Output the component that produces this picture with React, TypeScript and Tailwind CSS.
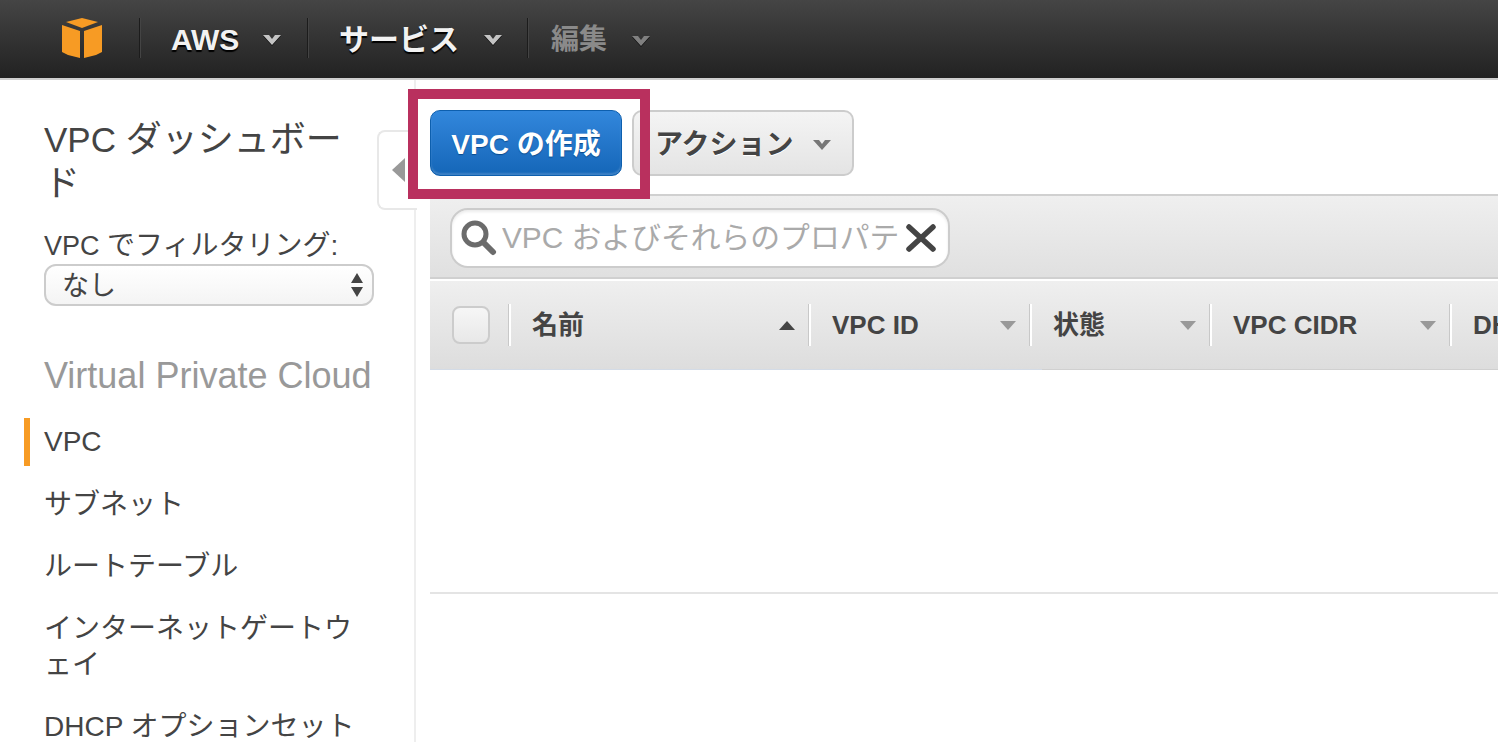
import { Fragment } from "react";

const FONT = "[font-family:'Liberation_Sans','Noto_Sans_CJK_JP',sans-serif]";

const navItems = [
  "サブネット",
  "ルートテーブル",
  "インターネットゲートウェイ",
  "DHCP オプションセット",
];

function Chevron({ color }: { color: string }) {
  return (
    <svg width="18" height="10" viewBox="0 0 18 10" className="drop-shadow-[0_1px_0_rgba(0,0,0,0.7)]">
      <path d="M0 0h6l3 4 3-4h6l-9 10z" fill={color} />
    </svg>
  );
}

function CubeLogo() {
  return (
    <svg width="40" height="40" viewBox="0 0 40 40">
      <path d="M4 4 20 0 36 4 20 10z" fill="#f79b24" />
      <path d="M0 7 18 13V40L6 37 0 34z" fill="#f79b24" />
      <path d="M40 7 22 13V40L34 37 40 34z" fill="#f79b24" />
    </svg>
  );
}

function TopBar() {
  return (
    <div className="flex h-[80px] shrink-0 items-center border-b-2 border-[#cfcfcf] bg-gradient-to-b from-[#454545] to-[#222222] pb-[2px]">
      <div className="ml-[62px] flex w-[77px] justify-start">
        <CubeLogo />
      </div>
      <div className="h-[40px] w-[2px] border-r border-[#444] bg-[#1c1c1c]" />
      <div className="flex w-[166px] items-center pl-[30px] pt-[2px] text-[30px] font-bold text-[#f2f2f2] [text-shadow:0_2px_1px_#000]">
        AWS
        <span className="ml-[24px] mt-[2px]"><Chevron color="#c4c4c4" /></span>
      </div>
      <div className="h-[40px] w-[2px] border-r border-[#444] bg-[#1c1c1c]" />
      <div className="flex w-[218px] items-center pl-[30px] pt-[2px] text-[30px] font-bold text-[#f2f2f2] [text-shadow:0_2px_1px_#000]">
        サービス
        <span className="ml-[25px] mt-[2px]"><Chevron color="#c4c4c4" /></span>
      </div>
      <div className="h-[40px] w-[2px] border-r border-[#444] bg-[#1c1c1c]" />
      <div className="flex items-center pl-[22px] pt-[3px] text-[28px] font-bold text-[#8a8a8a]">
        編集
        <span className="ml-[25px] mt-[2px]"><Chevron color="#808080" /></span>
      </div>
    </div>
  );
}

function Sidebar() {
  return (
    <div className="relative w-[416px] shrink-0 border-r-2 border-[#eeeeee] pl-[44px] pt-[38px] text-[#444444]">
      <h1 className="w-[310px] text-[35px] leading-[44px] font-normal">
        VPC <span className="text-[36px]">ダッシュボード</span>
      </h1>
      <div className="mt-[23px] text-[27px] leading-[34px]">
        VPC <span className="text-[28px]">でフィルタリング:</span>
      </div>
      <div className="mt-[1px] flex h-[42px] w-[330px] items-center justify-between rounded-[12px] border-2 border-[#cccccc] bg-gradient-to-b from-white to-[#f4f4f4] pl-[16px] pr-[8px] text-[27px]">
        <span className="pt-[3px]">なし</span>
        <svg width="14" height="26" viewBox="0 0 14 26">
          <path d="M7 1 13 11H1z M1 15H13L7 25z" fill="#444" />
        </svg>
      </div>
      <div className="mt-[48px] text-[36px] leading-[44px] text-[#999999]">Virtual Private Cloud</div>
      <div className="relative mt-[20px] flex h-[48px] items-center text-[28px]">
        <span className="absolute left-[-20px] top-0 h-full w-[6px] bg-[#f79b24]" />
        VPC
      </div>
      <div className="mt-[21px] flex w-[320px] flex-col gap-[26px] text-[28px] leading-[36px]">
        {navItems.map((item) => (
          <div key={item}>{item}</div>
        ))}
      </div>
      <div className="absolute left-[377px] top-[50px] flex h-[80px] w-[40px] items-center rounded-l-[8px] border-2 border-r-0 border-[#e8e8e8] bg-white pl-[13px]">
        <svg width="14" height="24" viewBox="0 0 14 24">
          <path d="M13 0V24L0 12z" fill="#999" />
        </svg>
      </div>
    </div>
  );
}

function SearchBox() {
  return (
    <div className="mt-[2px] flex h-[60px] w-[500px] shrink-0 items-center rounded-[18px] border-2 border-[#cccccc] bg-white pl-[9px] pr-[12px] shadow-[inset_0_2px_3px_rgba(0,0,0,0.08)]">
      <svg width="36" height="36" viewBox="0 0 36 36" className="shrink-0">
        <circle cx="14" cy="14" r="11" fill="none" stroke="#6b6b6b" strokeWidth="5" />
        <path d="M23 23 32 32" stroke="#6b6b6b" strokeWidth="6" strokeLinecap="round" />
      </svg>
      <span className="ml-[5px] flex-1 overflow-hidden whitespace-nowrap pt-[2px] text-[29.8px] text-[#aaaaaa]">VPC およびそれらのプロパテ</span>
      <svg width="30" height="28" viewBox="0 0 30 28" className="shrink-0">
        <path d="M3 3 27 25M27 3 3 25" stroke="#444" strokeWidth="5.5" strokeLinecap="round" />
      </svg>
    </div>
  );
}

const columns = [
  { label: "名前", width: "w-[297px]", up: true },
  { label: "VPC ID", width: "w-[218px]", up: false },
  { label: "状態", width: "w-[177px]", up: false },
  { label: "VPC CIDR", width: "w-[237px]", up: false },
];

function TableHeader() {
  return (
    <div className="relative mt-[2px] flex h-[89px] items-center border-b border-[#d0d0d0] bg-gradient-to-b from-[#efefef] to-[#dddddd]">
      <div className="ml-[22px] h-[38px] w-[38px] shrink-0 rounded-[8px] border-2 border-[#cccccc] bg-gradient-to-b from-[#f6f6f6] to-[#e8e8e8]" />
      <div className="ml-[18px] h-[42px] w-[3px] shrink-0 border-l border-[#c8c8c8] bg-white" />
      {columns.map((col) => (
        <Fragment key={col.label}>
          <div className={`flex shrink-0 items-center justify-between pl-[21px] pr-[13px] text-[26px] font-bold whitespace-nowrap text-[#444444] ${col.width}`}>
            {col.label}
            {col.up ? (
              <svg width="16" height="9" viewBox="0 0 16 9"><path d="M8 0 16 9H0z" fill="#444" /></svg>
            ) : (
              <svg width="16" height="9" viewBox="0 0 16 9"><path d="M0 0H16L8 9z" fill="#999" /></svg>
            )}
          </div>
          <div className="h-[42px] w-[3px] shrink-0 border-l border-[#c8c8c8] bg-white" />
        </Fragment>
      ))}
      <span className="pl-[21px] text-[26px] font-bold text-[#444444]">DHCP</span>
      <div className="absolute bottom-[-1px] left-0 h-[1px] w-[612px] bg-[#d3dbe6]" />
    </div>
  );
}

function Main() {
  return (
    <div className="min-w-0 flex-1 overflow-hidden pl-[14px] pt-[30px]">
      <div className="flex gap-[10px]">
        <div className="flex h-[66px] w-[192px] items-center justify-center rounded-[10px] border border-[#0d5fae] bg-gradient-to-b from-[#3287dc] to-[#1466b8] pt-[3px] text-[28px] font-bold text-white shadow-[inset_0_-2px_2px_rgba(255,255,255,0.18)] [text-shadow:0_1px_1px_#0a4a8c]">
          VPC の作成
        </div>
        <div className="flex h-[66px] w-[222px] items-center rounded-[10px] border-2 border-[#cccccc] bg-gradient-to-b from-[#f4f4f4] to-[#e4e4e4] pl-[21px] pt-[3px] text-[28px] font-bold text-[#444444] [text-shadow:0_1px_0_#fff]">
          アクション
          <svg width="20" height="13" viewBox="0 0 20 13" className="ml-[18px]">
            <path d="M1 2h6l3 4 3-4h6l-9 10z" fill="#777" />
          </svg>
        </div>
      </div>
      <div className="mt-[18px] flex h-[85px] w-[1068px] items-center border-t-2 border-b-2 border-[#d0d0d0] bg-gradient-to-b from-[#efefef] to-[#e0e0e0] pl-[20px]">
        <SearchBox />
      </div>
      <div className="w-[1068px]">
        <TableHeader />
      </div>
      <div className="mt-[222px] h-[2px] w-[1068px] bg-[#e4e4e4]" />
    </div>
  );
}

export default function App() {
  return (
    <div className={`relative flex h-[742px] w-[1498px] flex-col overflow-hidden bg-white ${FONT}`}>
      <TopBar />
      <div className="flex flex-1 overflow-hidden">
        <Sidebar />
        <Main />
      </div>
      {/* annotation around the create button */}
      <div className="pointer-events-none absolute left-[408px] top-[89px] h-[110px] w-[242px] border-[10px] border-[#b9305e]" />
    </div>
  );
}
